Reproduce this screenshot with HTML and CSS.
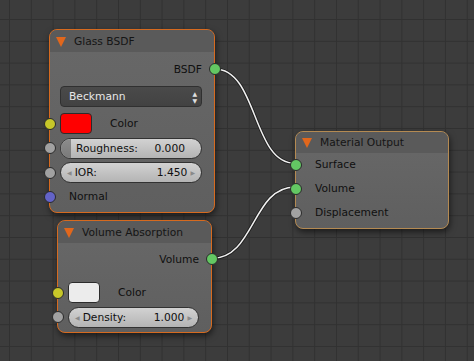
FILE: index.html
```html
<!DOCTYPE html>
<html lang="en">
<head>
    <meta charset="utf-8">
    <title>Node Editor - Glass material</title>
    <link rel="stylesheet" href="styles.css">
</head>
<body>
    <div class="canvas">
        <!-- node links, drawn under the nodes -->
        <svg class="links" width="474" height="361" viewBox="0 0 474 361">
            <path class="link-edge" d="M214.7 69 C 258 69, 252 163.3, 295 163.3"/>
            <path class="link" d="M214.7 69 C 258 69, 252 163.3, 295 163.3"/>
            <path class="link-edge" d="M211.7 258.5 C 255 258.5, 252 187, 295 187"/>
            <path class="link" d="M211.7 258.5 C 255 258.5, 252 187, 295 187"/>
        </svg>

        <!-- Glass BSDF -->
        <div class="node node-glass selected">
            <div class="node-head">
                <span class="tri"></span>
                <span class="title">Glass BSDF</span>
            </div>
            <div class="node-body">
                <div class="row row-out">
                    <span class="label">BSDF</span>
                    <i class="sock sock-out green"></i>
                </div>
                <div class="menu">
                    <span>Beckmann</span>
                    <span class="updown">&#9650;<br>&#9660;</span>
                </div>
                <div class="row row-color">
                    <i class="sock yellow"></i>
                    <span class="swatch red"></span>
                    <span class="label">Color</span>
                </div>
                <div class="row row-slider">
                    <i class="sock grey"></i>
                    <div class="slider slider-fill">
                        <span class="fill"></span>
                        <span class="name">Roughness:</span>
                        <span class="value">0.000</span>
                    </div>
                </div>
                <div class="row row-slider">
                    <i class="sock grey"></i>
                    <div class="slider">
                        <span class="arrow">&#9664;</span>
                        <span class="name">IOR:</span>
                        <span class="value">1.450</span>
                        <span class="arrow">&#9654;</span>
                    </div>
                </div>
                <div class="row row-in">
                    <i class="sock blue"></i>
                    <span class="label">Normal</span>
                </div>
            </div>
        </div>

        <!-- Volume Absorption -->
        <div class="node node-volume selected">
            <div class="node-head">
                <span class="tri"></span>
                <span class="title">Volume Absorption</span>
            </div>
            <div class="node-body">
                <div class="row row-out">
                    <span class="label">Volume</span>
                    <i class="sock sock-out green"></i>
                </div>
                <div class="row row-color row-color-gap">
                    <i class="sock yellow"></i>
                    <span class="swatch white"></span>
                    <span class="label">Color</span>
                </div>
                <div class="row row-slider">
                    <i class="sock grey"></i>
                    <div class="slider">
                        <span class="arrow">&#9664;</span>
                        <span class="name">Density:</span>
                        <span class="value">1.000</span>
                        <span class="arrow">&#9654;</span>
                    </div>
                </div>
            </div>
        </div>

        <!-- Material Output -->
        <div class="node node-output active">
            <div class="node-head">
                <span class="tri"></span>
                <span class="title">Material Output</span>
            </div>
            <div class="node-body">
                <div class="row row-sock">
                    <i class="sock green"></i>
                    <span class="label">Surface</span>
                </div>
                <div class="row row-sock">
                    <i class="sock green"></i>
                    <span class="label">Volume</span>
                </div>
                <div class="row row-sock">
                    <i class="sock grey"></i>
                    <span class="label">Displacement</span>
                </div>
            </div>
        </div>
    </div>
</body>
</html>
```

FILE: styles.css
```css
body,
html {
    margin: 0px;
    width: 474px;
    height: 361px;
    overflow: hidden;
    background-color: #3b3b3b;
    font-family: "DejaVu Sans", sans-serif;
    font-size: 10.7px;
    color: #101010;
}

/* Zeichenfläche mit Raster */
.canvas {
    position: relative;
    width: 474px;
    height: 361px;
    background-color: #3c3c3c;
    background-image:
        linear-gradient(to right, #313131 1px, transparent 1px),
        linear-gradient(to bottom, #313131 1px, transparent 1px);
    background-size: 21.8px 21.8px;
    background-position: 9px 19px;
}

.links {
    position: absolute;
    left: 0;
    top: 0;
}

.link-edge {
    fill: none;
    stroke: #1e1e1e;
    stroke-width: 3.2;
}

.link {
    fill: none;
    stroke: #f0f0f0;
    stroke-width: 1.5;
}

/* Knoten */
.node {
    position: absolute;
    box-sizing: border-box;
    border-radius: 8px;
    background: linear-gradient(to bottom, #686868, #5f5f5f);
    box-shadow: 1px 3px 6px rgba(0, 0, 0, 0.55);
    display: flex;
    flex-direction: column;
}

.selected {
    border: 1.5px solid #d66a1f;
}

.active {
    border: 1.5px solid #b48a52;
}

.node-glass {
    left: 49px;
    top: 29px;
    width: 166px;
    height: 184px;
}

.node-volume {
    left: 57px;
    top: 220px;
    width: 155px;
    height: 113px;
}

.node-output {
    left: 295px;
    top: 130.5px;
    width: 154px;
    height: 98px;
}

.node-head {
    height: 22px;
    box-sizing: border-box;
    padding-top: 1px;
    display: flex;
    align-items: center;
    gap: 8px;
    padding-left: 6px;
    background-color: #5a5a5a;
    border-radius: 7px 7px 0 0;
}

.node-output .node-head {
    height: 21px;
}

.tri {
    width: 0;
    height: 0;
    border-left: 5px solid transparent;
    border-right: 5px solid transparent;
    border-top: 10px solid #e1671c;
}

.title {
    color: #151515;
}

.node-body {
    position: relative;
    flex: 1;
    display: flex;
    flex-direction: column;
}

.node-glass .node-body {
    padding: 6px 12px 0 10px;
}

.node-volume .node-body {
    padding: 5px 12px 0 10px;
}

.row {
    position: relative;
    display: flex;
    align-items: center;
    height: 21px;
}

.row-out {
    justify-content: flex-end;
    height: 22px;
    padding-right: 12px;
    margin-right: -12px;
}

.row-color {
    margin-top: 6px;
}

.row-color-gap {
    margin-top: 12px;
}

.row-slider {
    margin-top: 3.5px;
}

.row-in {
    margin-top: 3px;
    padding-left: 9px;
}

.row-sock {
    height: 24px;
    padding-left: 19px;
}

/* Anschlüsse */
.sock {
    position: absolute;
    width: 10px;
    height: 10px;
    border-radius: 50%;
    border: 1px solid #2a2a2a;
    top: 50%;
    margin-top: -6px;
}

.node-glass .row .sock,
.node-volume .row .sock {
    left: -16.5px;
}

.node-glass .row .sock-out,
.node-volume .row .sock-out {
    left: auto;
    right: -6.5px;
}

.node-output .row .sock {
    left: -6.5px;
}

.green {
    background-color: #63c763;
}

.yellow {
    background-color: #c7c729;
}

.grey {
    background-color: #a1a1a1;
}

.blue {
    background-color: #6363c7;
}

/* Auswahlmenü */
.menu {
    margin-top: 6px;
    height: 21px;
    box-sizing: border-box;
    border: 1px solid #303030;
    border-radius: 4px;
    background: linear-gradient(to bottom, #4a4a4a, #424242);
    color: #e8e8e8;
    display: flex;
    align-items: center;
    justify-content: space-between;
    padding: 0 4px 0 8px;
}

.updown {
    font-size: 6px;
    line-height: 7px;
    color: #e0e0e0;
    text-align: center;
}

.swatch {
    width: 32px;
    height: 21px;
    box-sizing: border-box;
    border-radius: 4px;
    border: 1px solid #2c2c2c;
    margin-right: 18px;
}

.red {
    background-color: #ff0000;
}

.white {
    background-color: #ececec;
}

/* Zahlenfelder */
.slider {
    position: relative;
    flex: 1;
    height: 21px;
    box-sizing: border-box;
    border: 1px solid #323232;
    border-radius: 11px;
    background: linear-gradient(to bottom, #d2d2d2, #b4b4b4);
    display: flex;
    align-items: center;
    padding: 0 6px 0 6px;
    overflow: hidden;
}

.slider .name {
    flex: 1;
    padding-left: 3px;
}

.slider-fill .name {
    padding-left: 9px;
}

.slider .value {
    padding-right: 3px;
}

.slider-fill .value {
    padding-right: 10px;
}

.fill {
    position: absolute;
    left: 0;
    top: 0;
    bottom: 0;
    width: 10px;
    background: linear-gradient(to bottom, #8c8c8c, #7a7a7a);
}

.arrow {
    font-size: 6px;
    color: #8a8a8a;
}
```
